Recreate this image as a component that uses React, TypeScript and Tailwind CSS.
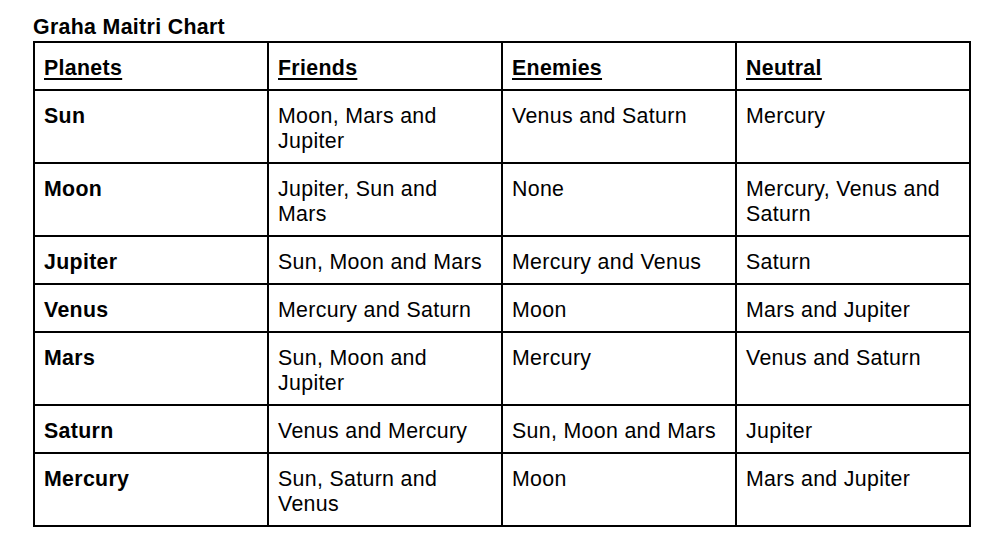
import * as React from "react";

type Row = {
  planet: string;
  friends: string;
  enemies: string;
  neutral: string;
};

const rows: Row[] = [
  { planet: "Sun", friends: "Moon, Mars and Jupiter", enemies: "Venus and Saturn", neutral: "Mercury" },
  { planet: "Moon", friends: "Jupiter, Sun and Mars", enemies: "None", neutral: "Mercury, Venus and Saturn" },
  { planet: "Jupiter", friends: "Sun, Moon and Mars", enemies: "Mercury and Venus", neutral: "Saturn" },
  { planet: "Venus", friends: "Mercury and Saturn", enemies: "Moon", neutral: "Mars and Jupiter" },
  { planet: "Mars", friends: "Sun, Moon and Jupiter", enemies: "Mercury", neutral: "Venus and Saturn" },
  { planet: "Saturn", friends: "Venus and Mercury", enemies: "Sun, Moon and Mars", neutral: "Jupiter" },
  { planet: "Mercury", friends: "Sun, Saturn and Venus", enemies: "Moon", neutral: "Mars and Jupiter" },
];

const headers = ["Planets", "Friends", "Enemies", "Neutral"];

function Cell({ children, className = "" }: { children: React.ReactNode; className?: string }) {
  return (
    <div className={`border-r-2 border-b-2 border-black pl-[9px] pr-[12px] pt-[13px] pb-[8px] ${className}`}>
      {children}
    </div>
  );
}

export default function App() {
  return (
    <div
      className="min-h-[548px] w-[1004px] bg-white pt-[15px] pl-[33px] text-black text-[21.33px] leading-[25px] tracking-[0.33px]"
      style={{ fontFamily: '"Liberation Sans", Arial, sans-serif' }}
    >
      <div className="mb-[1px] font-bold">Graha Maitri Chart</div>
      <div className="grid w-[938px] grid-cols-[234px_234px_234px_234px] border-l-2 border-t-2 border-black">
        {headers.map((h) => (
          <Cell key={h} className="font-bold">
            <span className="underline decoration-[1.5px] underline-offset-[3px]">{h}</span>
          </Cell>
        ))}
        {rows.map((r) => (
          <React.Fragment key={r.planet}>
            <Cell className="font-bold">{r.planet}</Cell>
            <Cell>{r.friends}</Cell>
            <Cell>{r.enemies}</Cell>
            <Cell>{r.neutral}</Cell>
          </React.Fragment>
        ))}
      </div>
    </div>
  );
}
